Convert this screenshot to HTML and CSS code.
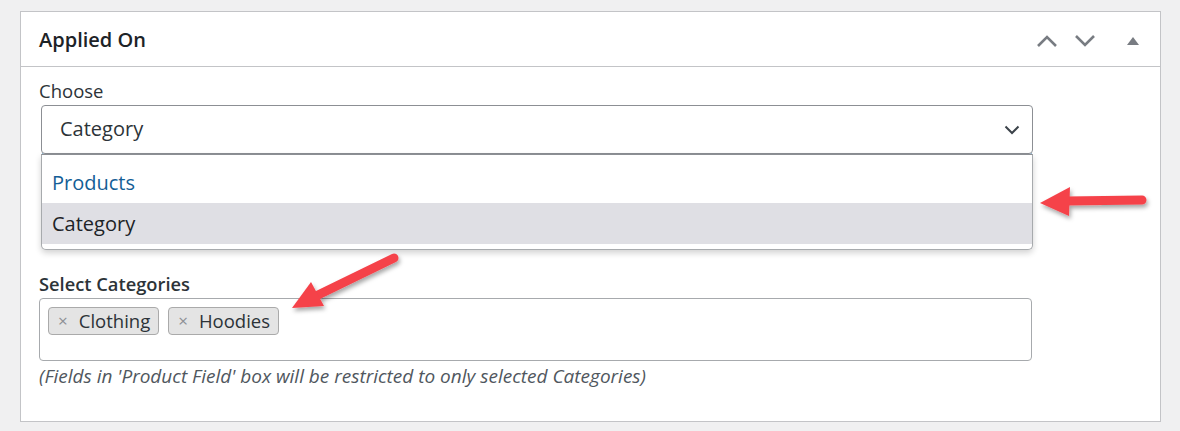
FILE: index.html
```html
<!DOCTYPE html>
<html>
<head>
<meta charset="utf-8">
<link rel="stylesheet" href="styles.css">
</head>
<body>
<div class="page">
  <div class="postbox">
    <div class="postbox-header">
      <h2 class="title">Applied On</h2>
      <div class="handle-actions">
        <svg class="hicon" width="22" height="14" viewBox="0 0 22 14"><path d="M2 12 L11 3 L20 12" fill="none" stroke="#787c82" stroke-width="2.6"/></svg>
        <svg class="hicon" width="22" height="14" viewBox="0 0 22 14"><path d="M2 2 L11 11 L20 2" fill="none" stroke="#787c82" stroke-width="2.6"/></svg>
        <svg class="hicon tri" width="14" height="10" viewBox="0 0 14 10"><path d="M1 9 L7 1 L13 9 Z" fill="#787c82"/></svg>
      </div>
    </div>
    <div class="inside">
      <label class="lbl">Choose</label>
      <div class="select-wrap">
        <div class="select">
          <span>Category</span>
          <svg class="chev" width="16" height="10" viewBox="0 0 16 10"><path d="M1.5 1.5 L8 8 L14.5 1.5" fill="none" stroke="#3c434a" stroke-width="2"/></svg>
        </div>
        <div class="dropdown">
          <div class="opt opt-blue">Products</div>
          <div class="opt opt-sel">Category</div>
        </div>
      </div>
      <label class="lbl lbl-strong">Select Categories</label>
      <div class="multi">
        <span class="tag"><span class="x">×</span>Clothing</span>
        <span class="tag"><span class="x">×</span>Hoodies</span>
      </div>
      <p class="help">(Fields in 'Product Field' box will be restricted to only selected Categories)</p>
    </div>
  </div>
  <svg class="arrows" width="1180" height="431" viewBox="0 0 1180 431">
    <defs>
      <filter id="sh" x="-20%" y="-50%" width="140%" height="200%">
        <feDropShadow dx="1.5" dy="3" stdDeviation="2" flood-color="#000" flood-opacity="0.35"/>
      </filter>
    </defs>
    <g filter="url(#sh)" fill="#f5424a">
      <path d="M1066 201 L1142 200" stroke="#f5424a" stroke-width="9" stroke-linecap="round" fill="none"/>
      <path d="M1040 203 L1070 187 L1069 216 Z"/>
      <path d="M394 258 L318 295" stroke="#f5424a" stroke-width="9" stroke-linecap="round" fill="none"/>
      <path d="M292 308 L311 282 L324 306 Z"/>
    </g>
  </svg>
</div>
</body>
</html>
```
FILE: styles.css
```css
* { box-sizing: border-box; }
html, body { margin: 0; padding: 0; }
body {
  background: #f0f0f1;
  font-family: "Open Sans", "Noto Sans", sans-serif;
  color: #1d2327;
  width: 1180px;
  height: 431px;
  overflow: hidden;
}
.page { position: relative; padding: 11px 19px 0 20px; }
.postbox {
  width: 1141px;
  height: 411px;
  background: #fff;
  border: 1px solid #c3c4c7;
}
.postbox-header {
  height: 55px;
  border-bottom: 1px solid #c3c4c7;
  display: flex;
  align-items: center;
  justify-content: space-between;
  padding: 0 18px 0 18px;
}
.title {
  margin: 0;
  font-size: 20px;
  font-weight: 600;
  color: #1d2327;
  line-height: 28px;
  padding-top: 2px;
}
.handle-actions { display: flex; align-items: center; gap: 16px; padding-top: 3px; }
.hicon { display: block; }
.tri { margin-left: 14px; margin-right: 2px; }
.inside { padding: 11px 18px 0 18px; }
.lbl {
  display: block;
  font-size: 18.5px;
  color: #2c3338;
  line-height: 26px;
}
.lbl-strong { font-weight: 600; margin-top: 117px; font-size: 18.3px; line-height: 26px; }
.select-wrap { position: relative; margin-left: 2px; width: 992px; margin-top: 1px; }
.select {
  height: 49px;
  border: 1px solid #8c8f94;
  border-radius: 4px;
  display: flex;
  align-items: center;
  justify-content: space-between;
  padding: 0 12px 0 18px;
  font-size: 20px;
  color: #2c3338;
  box-shadow: 0 2px 0 -1px #2271b1;
}
.select span { padding-bottom: 2px; }
.dropdown {
  position: absolute;
  left: 0;
  top: 49px;
  width: 992px;
  height: 96px;
  background: #fff;
  border: 1px solid #a7aaad;
  border-top-color: #8c8f94;
  border-radius: 0 0 5px 5px;
  box-shadow: 0 3px 6px rgba(0,0,0,0.18);
  padding-top: 6px;
}
.opt {
  height: 42px;
  display: flex;
  align-items: center;
  padding-left: 10px;
  font-size: 20px;
}
.opt-blue { color: #135e96; }
.opt-sel { background: #dfdfe4; color: #1d2327; height: 41px; }
.multi {
  margin-top: 1px;
  width: 993px;
  height: 63px;
  border: 1px solid #a7aaad;
  border-radius: 4px;
  padding: 8px 8px;
  display: flex;
  align-items: flex-start;
  gap: 9px;
}
.tag {
  display: flex;
  align-items: center;
  height: 28px;
  background: #e4e4e4;
  border: 1px solid #aaa;
  border-radius: 4px;
  padding: 0 8px 2px 9px;
  font-size: 18.5px;
  color: #2c3338;
}
.x { color: #8c8f94; font-size: 17px; margin-right: 11px; }
.help {
  margin: 2px 0 0 0;
  font-size: 19px;
  line-height: 26px;
  font-style: italic;
  color: #50575e;
}
.arrows { position: absolute; left: 0; top: 0; pointer-events: none; }
```
